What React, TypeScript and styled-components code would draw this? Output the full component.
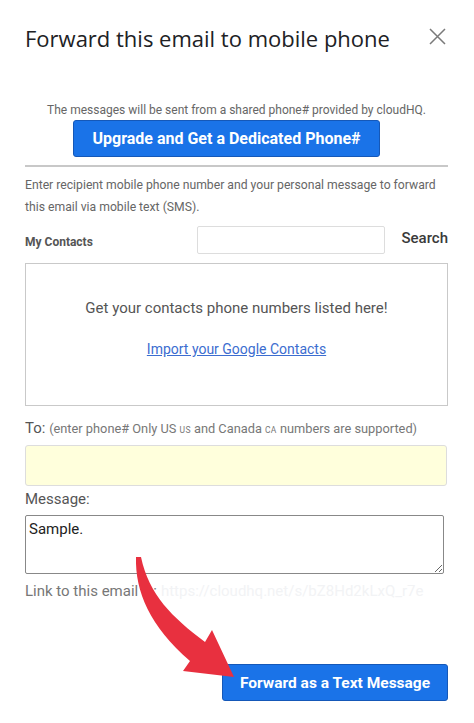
import React from "react";
import styled, { createGlobalStyle } from "styled-components";

const Global = createGlobalStyle`
  html, body { margin: 0; padding: 0; background: #fff; }
  body { font-family: Roboto, "Liberation Sans", Arial, sans-serif; color: #333; }
  * { box-sizing: border-box; }
`;

const Dialog = styled.div`
  position: relative;
  width: 474px;
  height: 723px;
  padding: 0 26px 0 25px;
  background: #fff;
  overflow: hidden;
`;

const Header = styled.div`
  display: flex;
  justify-content: space-between;
  align-items: center;
  padding-top: 24px;
  height: 52px;
`;

const Title = styled.h1`
  margin: 0;
  font-family: "Open Sans", Roboto, sans-serif;
  font-weight: 400;
  font-size: 22px;
  line-height: 28px;
  color: #202124;
`;

const Close = styled.button`
  border: 0;
  background: none;
  padding: 0;
  width: 20px;
  height: 20px;
  margin-right: 1px;
  margin-top: -4px;
  display: flex;
  align-items: center;
  justify-content: center;
`;

const Notice = styled.p`
  margin: 51px 0 0;
  text-align: center;
  font-size: 12px;
  line-height: 14px;
  color: #666;
`;

const Center = styled.div`
  display: flex;
  justify-content: center;
  margin-top: 3px;
  padding-right: 20px;
`;

const BlueButton = styled.button<{ $w: number; $h: number; $fs: number }>`
  width: ${(p) => p.$w}px;
  height: ${(p) => p.$h}px;
  background: #1a73e8;
  border: 1px solid #1558b8;
  border-radius: 3px;
  color: #fff;
  font-family: Roboto, sans-serif;
  font-weight: 700;
  font-size: ${(p) => p.$fs}px;
  padding: 0;
`;

const Rule = styled.hr`
  margin: 8px 0 0;
  border: 0;
  border-top: 2px solid #c8c8c8;
`;

const Intro = styled.p`
  margin: 7px 0 0;
  font-size: 12.2px;
  line-height: 22px;
  color: #666;
`;

const ContactsRow = styled.div`
  display: flex;
  align-items: center;
  margin-top: 8px;
  height: 28px;
`;

const ContactsLabel = styled.span`
  font-size: 12px;
  font-weight: 700;
  color: #555;
  width: 172px;
  margin-top: 4px;
`;

const SearchInput = styled.input`
  width: 188px;
  height: 28px;
  border: 1px solid #ddd;
  border-radius: 2px;
  outline: none;
`;

const SearchLabel = styled.span`
  margin-left: auto;
  font-size: 15px;
  font-weight: 500;
  color: #3a3a3a;
  margin-top: -4px;
`;

const ContactsBox = styled.div`
  margin-top: 9px;
  height: 143px;
  border: 1px solid #c9c9c9;
  display: flex;
  flex-direction: column;
  align-items: center;
  padding-top: 34px;
`;

const BoxText = styled.div`
  font-size: 15px;
  color: #555;
  line-height: 20px;
`;

const BoxLink = styled.a`
  margin-top: 21px;
  font-size: 14px;
  color: #3c6dd0;
  text-decoration: underline;
  line-height: 20px;
`;

const ToLabel = styled.div`
  margin-top: 12px;
  font-size: 15px;
  color: #555;
  line-height: 20px;
  white-space: nowrap;
`;

const Hint = styled.span`
  font-size: 12.8px;
  color: #777;
`;

const Small = styled.span`
  font-size: 8.5px;
  text-transform: uppercase;
  letter-spacing: 0.3px;
`;

const ToInput = styled.div`
  margin-top: 5px;
  height: 41px;
  background: #ffffdc;
  border: 1px solid #ddd;
  border-radius: 3px;
  width: 422px;
`;

const MessageLabel = styled.div`
  margin-top: 3px;
  font-size: 15px;
  color: #555;
  line-height: 20px;
`;

const TextArea = styled.textarea`
  display: block;
  margin-top: 6px;
  width: 419px;
  height: 59px;
  border: 1px solid #888;
  border-radius: 2px;
  font-family: Roboto, sans-serif;
  font-size: 15px;
  color: #222;
  padding: 4px 3px;
  resize: vertical;
`;

const LinkRow = styled.div`
  margin-top: 7px;
  font-size: 15px;
  color: #777;
  line-height: 20px;
  white-space: nowrap;
`;

const FaintLink = styled.span`
  color: #f2f3f5;
  margin-left: 4px;
`;

const Footer = styled.div`
  display: flex;
  justify-content: flex-end;
  margin-top: 63px;
`;

const Arrow = styled.svg`
  position: absolute;
  left: 0;
  top: 0;
  pointer-events: none;
`;

export default function App() {
  return (
    <>
      <Global />
      <Dialog>
        <Header>
          <Title>Forward this email to mobile phone</Title>
          <Close aria-label="Close">
            <svg width="17" height="17" viewBox="0 0 17 17">
              <path d="M1 1 L16 16 M16 1 L1 16" stroke="#7a7a7a" strokeWidth="1.5" fill="none" />
            </svg>
          </Close>
        </Header>
        <Notice>The messages will be sent from a shared phone# provided by cloudHQ.</Notice>
        <Center>
          <BlueButton $w={307} $h={37} $fs={16}>Upgrade and Get a Dedicated Phone#</BlueButton>
        </Center>
        <Rule />
        <Intro>
          Enter recipient mobile phone number and your personal message to forward this email via mobile text (SMS).
        </Intro>
        <ContactsRow>
          <ContactsLabel>My Contacts</ContactsLabel>
          <SearchInput />
          <SearchLabel>Search</SearchLabel>
        </ContactsRow>
        <ContactsBox>
          <BoxText>Get your contacts phone numbers listed here!</BoxText>
          <BoxLink href="#">Import your Google Contacts</BoxLink>
        </ContactsBox>
        <ToLabel>
          To: <Hint>(enter phone# Only US <Small>us</Small> and Canada <Small>ca</Small> numbers are supported)</Hint>
        </ToLabel>
        <ToInput />
        <MessageLabel>Message:</MessageLabel>
        <TextArea defaultValue="Sample." />
        <LinkRow>
          Link to this email is:<FaintLink>https://cloudhq.net/s/bZ8Hd2kLxQ_r7e</FaintLink>
        </LinkRow>
        <Footer>
          <BlueButton $w={226} $h={37} $fs={15.5}>Forward as a Text Message</BlueButton>
        </Footer>
        <Arrow width="474" height="723" viewBox="0 0 474 723">
          <path
            d="M136,557 C135,592 150,626 190,661 L183,671 L234,677 L212,630 L205,642 C172,617 149,595 141,557 Z"
            fill="#e8303f"
          />
        </Arrow>
      </Dialog>
    </>
  );
}
